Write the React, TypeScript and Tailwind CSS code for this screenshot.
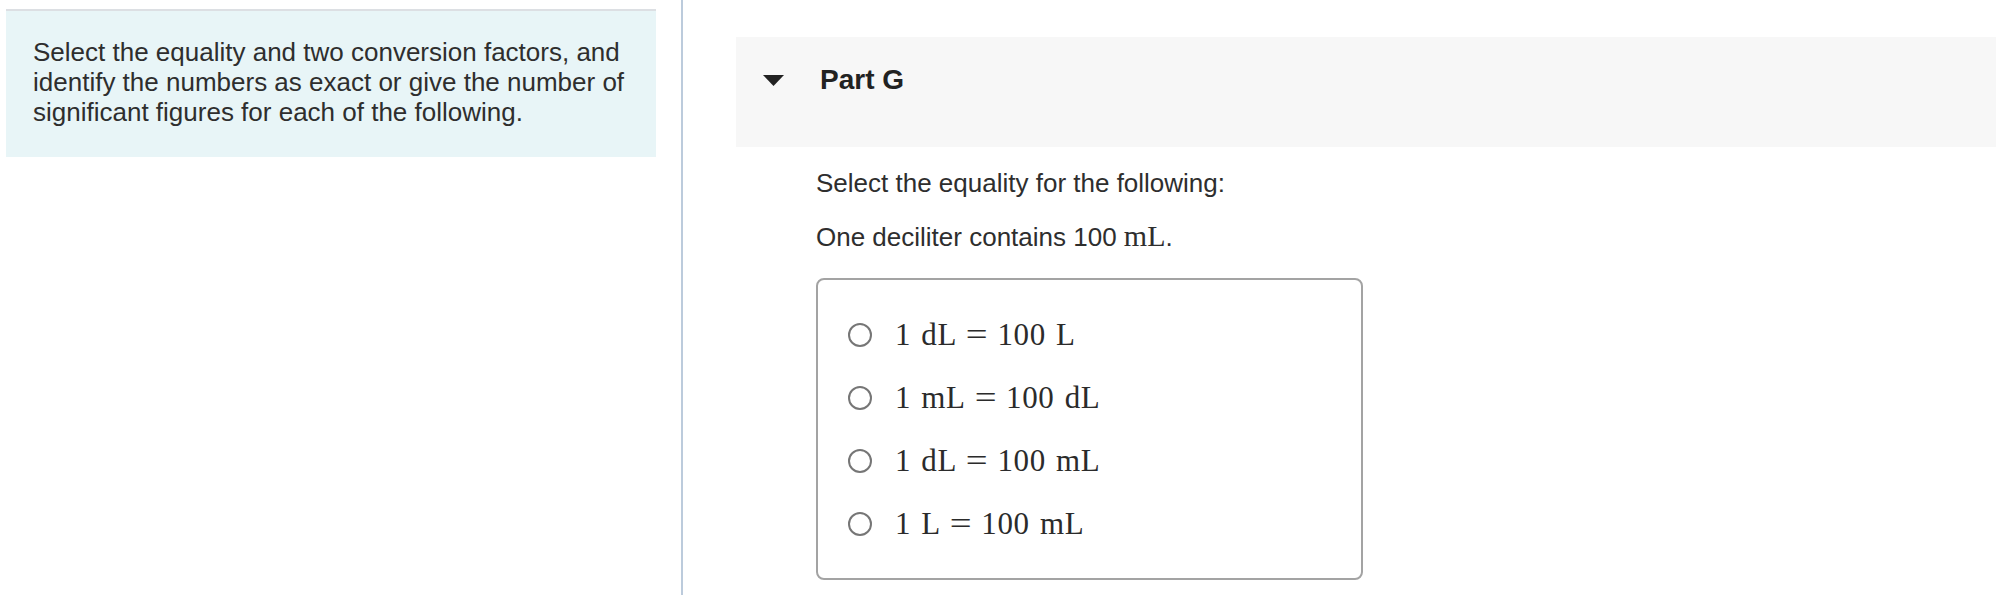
import React from 'react';

const sans = { fontFamily: '"Liberation Sans", Arial, sans-serif' };
const serif = { fontFamily: '"Liberation Serif", "Times New Roman", serif' };

const options = [
  ['1', 'dL', '100', 'L'],
  ['1', 'mL', '100', 'dL'],
  ['1', 'dL', '100', 'mL'],
  ['1', 'L', '100', 'mL'],
];

function MathEq({ a, ua, b, ub }: { a: string; ua: string; b: string; ub: string }) {
  return (
    <span
      className="text-[31px] leading-none tracking-[0.02em] text-[#2b2b2b] whitespace-nowrap"
      style={serif}
    >
      {a}
      <span className="ml-[0.33em]">{ua}</span>
      <span className="mx-[0.36em] inline-block scale-x-125">=</span>
      {b}
      <span className="ml-[0.33em]">{ub}</span>
    </span>
  );
}

export default function App() {
  return (
    <div className="flex h-[595px] w-[1996px] bg-white text-[#2e2e2e]" style={sans}>
      <aside className="w-[681px] shrink-0 pl-[6px] pr-[25px] pt-[9px]">
        <div className="border-t-2 border-[#dcdfe3] bg-[#e8f5f7] pl-[27px] pr-[20px] pt-[26px] pb-[30px] text-[26px] leading-[30px]">
          Select the equality and two conversion factors, and identify the numbers as exact or give the
          number of significant figures for each of the following.
        </div>
      </aside>

      <main className="flex-1 border-l-2 border-[#bccbdc] pl-[53px] pt-[37px]">
        <div className="h-[110px] bg-[#f7f7f7] pl-[27px] pt-[27px]">
          <div className="flex h-[32px] items-center gap-[36px]">
            <svg width="21" height="11" viewBox="0 0 21 11">
              <polygon points="0,0 21,0 10.5,11" fill="#222" />
            </svg>
            <span className="text-[28px] font-bold leading-[32px] text-[#222]">Part G</span>
          </div>
        </div>

        <div className="pl-[80px] text-[26px] leading-[30px]">
          <p className="mt-[21px]">Select the equality for the following:</p>
          <p className="mt-[23px]">
            One deciliter contains 100{' '}
            <span className="text-[30px]" style={serif}>
              mL
            </span>
            .
          </p>

          <div className="mt-[26px] w-[547px] rounded-[8px] border-2 border-[#a3a3a3] py-[23px] pl-[30px]">
            {options.map(([a, ua, b, ub], i) => (
              <label key={i} className="flex h-[63px] items-center gap-[23px]">
                <span className="h-[24px] w-[24px] shrink-0 rounded-full border-2 border-[#767676] bg-white" />
                <MathEq a={a} ua={ua} b={b} ub={ub} />
              </label>
            ))}
          </div>
        </div>
      </main>
    </div>
  );
}
